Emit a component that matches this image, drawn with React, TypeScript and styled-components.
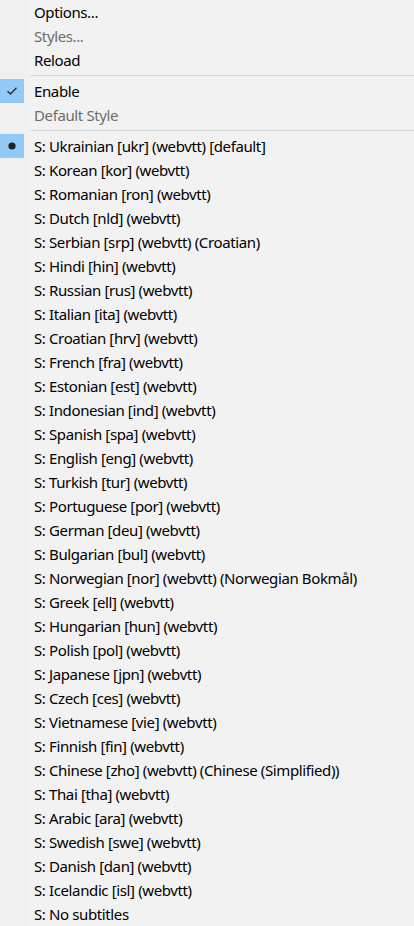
import styled, { createGlobalStyle } from "styled-components";

const GlobalStyle = createGlobalStyle`
  html, body {
    margin: 0;
    padding: 0;
    background: #f2f2f2;
  }
`;

const Menu = styled.div`
  width: 414px;
  height: 926px;
  overflow: hidden;
  display: flex;
  flex-direction: column;
  background: #f2f2f2;
  font-family: "Noto Sans", "Open Sans", sans-serif;
  font-size: 15px;
  letter-spacing: -0.38px;
  color: #000;
`;

const Item = styled.div`
  display: flex;
  align-items: center;
  height: 24px;
  flex-shrink: 0;
`;

const Gutter = styled.div`
  width: 30px;
  height: 100%;
  flex-shrink: 0;
  display: flex;
  align-items: center;
  background: #f0f0f0;
`;

const Mark = styled.div`
  width: 24px;
  height: 24px;
  display: flex;
  align-items: center;
  justify-content: center;
  background: #91c9f7;
`;

const Label = styled.span<{ $disabled?: boolean }>`
  padding-left: 4px;
  white-space: nowrap;
  line-height: 24px;
  color: ${(p) => (p.$disabled ? "#6d6d6d" : "#000")};
`;

const Separator = styled.div`
  display: flex;
  height: 7px;
  flex-shrink: 0;
`;

const SepLine = styled.div`
  flex: 1;
  border-top: 1px solid #d7d7d7;
  margin-top: 3px;
`;

const Check = () => (
  <svg width="12" height="10" viewBox="0 0 12 10">
    <path d="M1.5 5.2 L4.5 8 L10.5 1.8" fill="none" stroke="#2b2b2b" strokeWidth="1.4" />
  </svg>
);

const Bullet = () => (
  <svg width="8" height="8" viewBox="0 0 8 8">
    <circle cx="4" cy="4" r="3.6" fill="#1f1f1f" />
  </svg>
);

const subtitles = [
  "S: Ukrainian [ukr] (webvtt) [default]",
  "S: Korean [kor] (webvtt)",
  "S: Romanian [ron] (webvtt)",
  "S: Dutch [nld] (webvtt)",
  "S: Serbian [srp] (webvtt) (Croatian)",
  "S: Hindi [hin] (webvtt)",
  "S: Russian [rus] (webvtt)",
  "S: Italian [ita] (webvtt)",
  "S: Croatian [hrv] (webvtt)",
  "S: French [fra] (webvtt)",
  "S: Estonian [est] (webvtt)",
  "S: Indonesian [ind] (webvtt)",
  "S: Spanish [spa] (webvtt)",
  "S: English [eng] (webvtt)",
  "S: Turkish [tur] (webvtt)",
  "S: Portuguese [por] (webvtt)",
  "S: German [deu] (webvtt)",
  "S: Bulgarian [bul] (webvtt)",
  "S: Norwegian [nor] (webvtt) (Norwegian Bokmål)",
  "S: Greek [ell] (webvtt)",
  "S: Hungarian [hun] (webvtt)",
  "S: Polish [pol] (webvtt)",
  "S: Japanese [jpn] (webvtt)",
  "S: Czech [ces] (webvtt)",
  "S: Vietnamese [vie] (webvtt)",
  "S: Finnish [fin] (webvtt)",
  "S: Chinese [zho] (webvtt) (Chinese (Simplified))",
  "S: Thai [tha] (webvtt)",
  "S: Arabic [ara] (webvtt)",
  "S: Swedish [swe] (webvtt)",
  "S: Danish [dan] (webvtt)",
  "S: Icelandic [isl] (webvtt)",
  "S: No subtitles",
];

const MenuItem = ({
  label,
  disabled,
  mark,
}: {
  label: string;
  disabled?: boolean;
  mark?: "check" | "bullet";
}) => (
  <Item>
    <Gutter>
      {mark && <Mark>{mark === "check" ? <Check /> : <Bullet />}</Mark>}
    </Gutter>
    <Label $disabled={disabled}>{label}</Label>
  </Item>
);

const Sep = () => (
  <Separator>
    <Gutter />
    <SepLine />
  </Separator>
);

export default function App() {
  return (
    <>
      <GlobalStyle />
      <Menu>
        <MenuItem label="Options..." />
        <MenuItem label="Styles..." disabled />
        <MenuItem label="Reload" />
        <Sep />
        <MenuItem label="Enable" mark="check" />
        <MenuItem label="Default Style" disabled />
        <Sep />
        {subtitles.map((s, i) => (
          <MenuItem key={s} label={s} mark={i === 0 ? "bullet" : undefined} />
        ))}
      </Menu>
    </>
  );
}
